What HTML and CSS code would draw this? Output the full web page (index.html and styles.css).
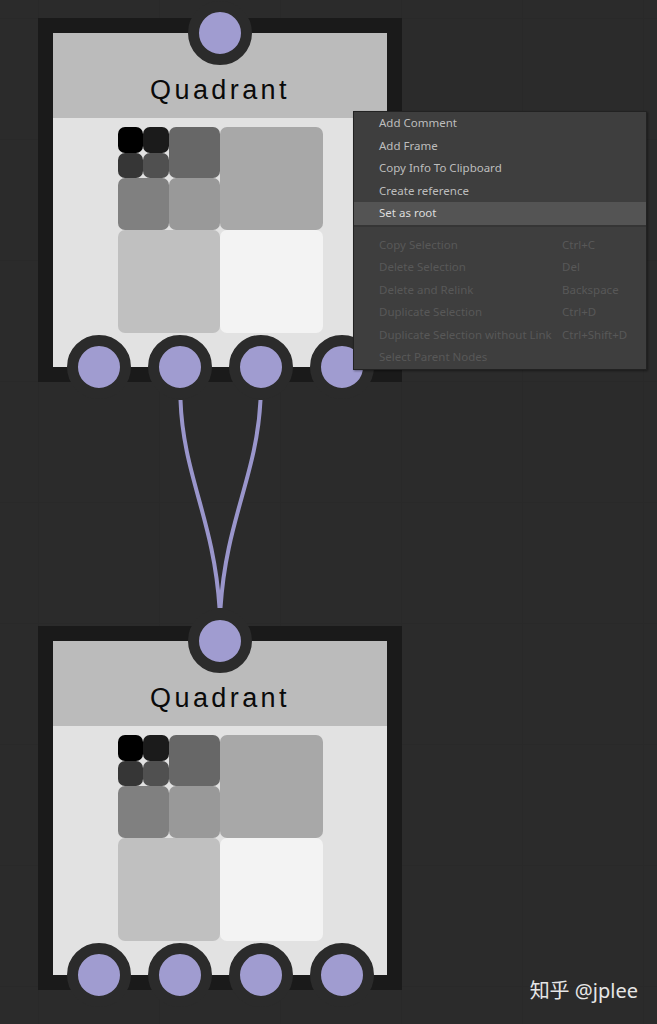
FILE: index.html
```html
<!doctype html>
<html lang="en">
  <head>
    <meta charset="UTF-8" />
    <title>Quadrant Graph</title>
    <link rel="stylesheet" href="styles.css">
  </head>
  <body>
    <div class="canvas">
      <svg class="wires" width="657" height="1024" viewBox="0 0 657 1024">
        <path d="M180.5 400 C183 475 214 520 219.5 608" />
        <path d="M260.5 400 C257 475 226 520 220.5 608" />
      </svg>

      <div class="node node-top">
        <div class="node-title">Quadrant</div>
        <div class="node-body">
          <div class="quad treemap">
            <div class="quad">
              <div class="quad">
                <div class="cell c1"></div>
                <div class="cell c2"></div>
                <div class="cell c3"></div>
                <div class="cell c4"></div>
              </div>
              <div class="cell c5"></div>
              <div class="cell c6"></div>
              <div class="cell c7"></div>
            </div>
            <div class="cell c8"></div>
            <div class="cell c9"></div>
            <div class="cell c10"></div>
          </div>
        </div>
        <div class="port port-in"></div>
        <div class="ports-out">
          <div class="port"></div>
          <div class="port"></div>
          <div class="port"></div>
          <div class="port"></div>
        </div>
      </div>

      <div class="node node-bottom">
        <div class="node-title">Quadrant</div>
        <div class="node-body">
          <div class="quad treemap">
            <div class="quad">
              <div class="quad">
                <div class="cell c1"></div>
                <div class="cell c2"></div>
                <div class="cell c3"></div>
                <div class="cell c4"></div>
              </div>
              <div class="cell c5"></div>
              <div class="cell c6"></div>
              <div class="cell c7"></div>
            </div>
            <div class="cell c8"></div>
            <div class="cell c9"></div>
            <div class="cell c10"></div>
          </div>
        </div>
        <div class="port port-in"></div>
        <div class="ports-out">
          <div class="port"></div>
          <div class="port"></div>
          <div class="port"></div>
          <div class="port"></div>
        </div>
      </div>

      <div class="menu">
        <div class="menu-item">Add Comment</div>
        <div class="menu-item">Add Frame</div>
        <div class="menu-item">Copy Info To Clipboard</div>
        <div class="menu-item">Create reference</div>
        <div class="menu-item active">Set as root</div>
        <div class="menu-sep"></div>
        <div class="menu-item disabled">Copy Selection<span class="shortcut">Ctrl+C</span></div>
        <div class="menu-item disabled">Delete Selection<span class="shortcut">Del</span></div>
        <div class="menu-item disabled">Delete and Relink<span class="shortcut">Backspace</span></div>
        <div class="menu-item disabled">Duplicate Selection<span class="shortcut">Ctrl+D</span></div>
        <div class="menu-item disabled">Duplicate Selection without Link<span class="shortcut">Ctrl+Shift+D</span></div>
        <div class="menu-item disabled">Select Parent Nodes</div>
      </div>

      <div class="watermark">知乎 @jplee</div>
    </div>
  </body>
</html>
```

FILE: styles.css
```css
html,
body {
  margin: 0;
  padding: 0;
  background: #2b2b2b;
}
.canvas {
  position: relative;
  width: 657px;
  height: 1024px;
  overflow: hidden;
  background-color: #2b2b2b;
  background-image:
    linear-gradient(to right, #292929 1px, transparent 1px),
    linear-gradient(to bottom, #292929 1px, transparent 1px);
  background-size: 121px 121px;
  background-position: 38px 18px;
}
.wires {
  position: absolute;
  left: 0;
  top: 0;
}
.wires path {
  fill: none;
  stroke: #9a96cc;
  stroke-width: 4;
}
.node {
  position: absolute;
  left: 38px;
  width: 364px;
  height: 364px;
  box-sizing: border-box;
  border: 15px solid #1a1a1a;
  background: #e2e2e2;
}
.node-top {
  top: 18px;
}
.node-bottom {
  top: 626px;
}
.node-title {
  height: 85px;
  box-sizing: border-box;
  padding-top: 39px;
  background: #bbbbbb;
  color: #0a0a0a;
  font-family: "Liberation Sans", Arial, sans-serif;
  font-size: 27px;
  line-height: 36px;
  letter-spacing: 3.4px;
  text-align: center;
}
.node-body {
  display: flex;
  justify-content: center;
  padding-top: 9px;
}
.quad {
  display: grid;
  grid-template-columns: 1fr 1fr;
  grid-template-rows: 1fr 1fr;
}
.treemap {
  width: 205px;
  height: 205.5px;
}
.cell {
  border-radius: 7px;
}
.c1 { background: #000000; }
.c2 { background: #1b1b1b; }
.c3 { background: #363636; }
.c4 { background: #505050; }
.c5 { background: #676767; }
.c6 { background: #808080; }
.c7 { background: #999999; }
.c8 { background: #a8a8a8; }
.c9 { background: #c0c0c0; }
.c10 { background: #f3f3f3; }
.port {
  width: 64px;
  height: 64px;
  box-sizing: border-box;
  border: 11.5px solid #2b2b2b;
  border-radius: 50%;
  background: #a09cd0;
}
.port-in {
  position: absolute;
  left: 135px;
  top: -32px;
}
.ports-out {
  position: absolute;
  left: 14px;
  top: 302px;
  display: flex;
  gap: 17px;
}
.menu {
  position: absolute;
  left: 353px;
  top: 111px;
  width: 292px;
  background: #3e3e3e;
  border: 1px solid #222222;
  box-shadow: 1px 1px 2px rgba(0, 0, 0, 0.4);
  font-family: "Noto Sans", "Open Sans", sans-serif;
  font-size: 11.5px;
}
.menu-item {
  position: relative;
  height: 22.5px;
  line-height: 21.5px;
  padding-left: 25px;
  color: #bdbdbd;
  white-space: nowrap;
}
.menu-item.active {
  background: #545454;
  color: #dddddd;
}
.menu-item.disabled {
  color: #585858;
}
.shortcut {
  position: absolute;
  left: 208px;
  top: 0;
}
.menu-sep {
  height: 9px;
  box-sizing: border-box;
  border-top: 2px solid #353535;
}
.watermark {
  position: absolute;
  right: 19px;
  top: 977px;
  color: #e6e6e6;
  font-family: "Noto Sans", "Noto Sans CJK SC", sans-serif;
  font-size: 20px;
  line-height: 28px;
}
```
